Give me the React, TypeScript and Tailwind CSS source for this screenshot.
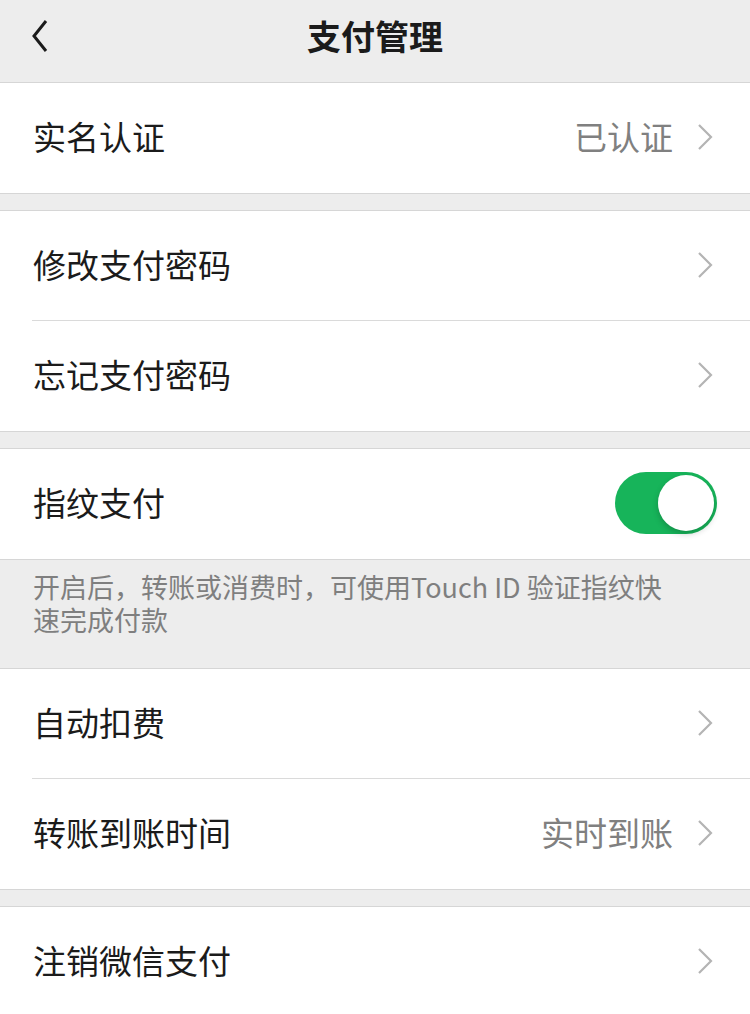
const font = { fontFamily: '"Noto Sans CJK SC", "Noto Sans", sans-serif' };

function Chevron() {
  return (
    <svg width="16" height="28" viewBox="0 0 16 28" className="shrink-0">
      <path d="M2 2 L14 14 L2 26" fill="none" stroke="#b4b4b4" strokeWidth="2.2" />
    </svg>
  );
}

function Row({
  label,
  value,
  divider,
  right,
}: {
  label: string;
  value?: string;
  divider?: boolean;
  right?: React.ReactNode;
}) {
  return (
    <div className="relative flex h-[110px] items-center bg-white pb-[3px] pl-[33px] pr-[37px]">
      <span className="flex-1 text-[33px] leading-none text-[#1b1b1b]">{label}</span>
      {right ?? (
        <div className="flex items-center gap-[24px]">
          {value && <span className="text-[33px] leading-none text-[#808080]">{value}</span>}
          <Chevron />
        </div>
      )}
      {divider && <div className="absolute bottom-0 left-[32px] right-0 h-px bg-[#dadada]" />}
    </div>
  );
}

function Group({ children }: { children: React.ReactNode }) {
  return <div className="border-y border-[#d6d6d6] bg-white">{children}</div>;
}

function Toggle() {
  return (
    <div className="flex h-[62px] w-[102px] items-center justify-end rounded-full bg-[#17b45a] p-[3px]">
      <div className="h-[56px] w-[56px] rounded-full bg-white shadow-[0_3px_6px_rgba(0,0,0,0.2)]" />
    </div>
  );
}

export default function App() {
  return (
    <div className="h-[1014px] w-[750px] overflow-hidden bg-[#ededed]" style={font}>
      <header className="relative flex h-[82px] items-center justify-center pb-[10px]">
        <svg width="18" height="34" viewBox="0 0 18 34" className="absolute left-[31px] top-[19px]">
          <path d="M15 2 L3 17 L15 32" fill="none" stroke="#1b1b1b" strokeWidth="3" />
        </svg>
        <h1 className="text-[34px] font-bold leading-none text-[#1b1b1b]">支付管理</h1>
      </header>

      <Group>
        <Row label="实名认证" value="已认证" />
      </Group>
      <div className="h-[16px]" />
      <Group>
        <Row label="修改支付密码" divider />
        <Row label="忘记支付密码" />
      </Group>
      <div className="h-[16px]" />
      <Group>
        <Row label="指纹支付" right={<div className="-mr-[4px]"><Toggle /></div>} />
      </Group>
      <div className="flex h-[108px] flex-col gap-[2px] pl-[33px] pt-[11px] text-[27px] leading-[31px] text-[#7f7f7f]">
        <span>开启后，转账或消费时，可使用Touch ID 验证指纹快</span>
        <span>速完成付款</span>
      </div>
      <Group>
        <Row label="自动扣费" divider />
        <Row label="转账到账时间" value="实时到账" />
      </Group>
      <div className="h-[16px]" />
      <Group>
        <Row label="注销微信支付" />
      </Group>
    </div>
  );
}
